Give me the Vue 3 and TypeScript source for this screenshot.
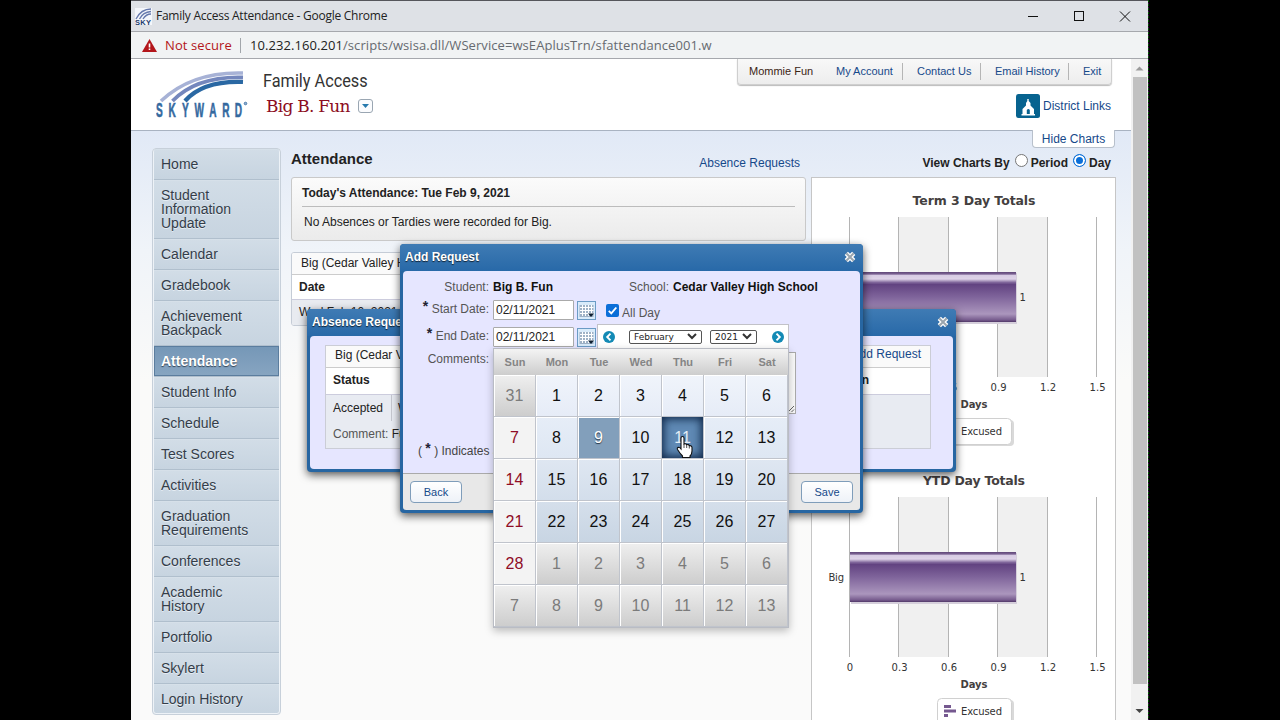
<script setup lang="ts">
interface NavItem { lines: string[]; active?: boolean }
const nav: NavItem[] = [
  { lines: ['Home'] },
  { lines: ['Student', 'Information', 'Update'] },
  { lines: ['Calendar'] },
  { lines: ['Gradebook'] },
  { lines: ['Achievement', 'Backpack'] },
  { lines: ['Attendance'], active: true },
  { lines: ['Student Info'] },
  { lines: ['Schedule'] },
  { lines: ['Test Scores'] },
  { lines: ['Activities'] },
  { lines: ['Graduation', 'Requirements'] },
  { lines: ['Conferences'] },
  { lines: ['Academic', 'History'] },
  { lines: ['Portfolio'] },
  { lines: ['Skylert'] },
  { lines: ['Login History'] },
]

interface Chart { id: string; title: string; width: number }
const charts: Chart[] = [
  { id: 'term', title: 'Term 3 Day Totals', width: 123 },
  { id: 'ytd', title: 'YTD Day Totals', width: 102 },
]
const ticks = [
  { x: 38, label: '0' },
  { x: 87.5, label: '0.3' },
  { x: 137, label: '0.6' },
  { x: 186.5, label: '0.9' },
  { x: 236, label: '1.2' },
  { x: 285.5, label: '1.5' },
]

const weekdays = ['Sun', 'Mon', 'Tue', 'Wed', 'Thu', 'Fri', 'Sat']
interface Day { n: number; kind: string }
const days: Day[] = []
for (let i = 0; i < 42; i++) {
  const row = Math.floor(i / 7)
  if (i === 0) days.push({ n: 31, kind: 'other' })
  else if (i <= 28) {
    let kind = 'r' + row
    if (i % 7 === 0) kind = 'sunday'
    if (i === 9) kind = 'now'
    if (i === 11) kind = 'picked'
    days.push({ n: i, kind })
  } else days.push({ n: i - 28, kind: 'other' })
}
</script>

<template>
  <div class="screen">
    <div class="window">
      <div class="titlebar">
        <svg class="fav" width="17" height="17" viewBox="0 0 17 17">
          <rect width="17" height="17" fill="#f4f6fb" />
          <path d="M1 11Q6 1 16 1M4.500 11Q8 4 16 3.500M8 11Q11 6 16 6" fill="none" stroke="#6679ad" stroke-width="1.300" />
          <text x="0" y="16.500" font-size="7.500" font-weight="700" textLength="16" fill="#1d3c6c">SKY</text>
        </svg>
        <span class="wtitle">Family Access Attendance - Google Chrome</span>
        <svg class="winbtns" width="110" height="14" viewBox="0 0 110 14" fill="none" stroke="#111">
          <path d="M4 7.500H14" />
          <rect x="50.500" y="2.500" width="9" height="9" />
          <path d="M96 2.500L106 12.500M106 2.500L96 12.500" />
        </svg>
      </div>
      <div class="address">
        <svg width="15" height="13" viewBox="0 0 15 13"><path d="M7.500 0L15 13H0Z" fill="#b3161b" /><path d="M7.500 4.500V8.500M7.500 9.500V11" stroke="#fff" stroke-width="1.600" /></svg>
        <span class="notsecure">Not secure</span>
        <i class="bar"></i>
        <span class="url"><b>10.232.160.201</b>/scripts/wsisa.dll/WService=wsEAplusTrn/sfattendance001.w</span>
      </div>

      <div class="viewport">
        <div class="page">
          <header class="top">
            <svg class="logo" width="96" height="52" viewBox="0 0 96 52">
              <g fill="none">
                <path d="M5 32Q36 2.500 87 4" stroke="#a7b2d6" stroke-width="3.600" />
                <path d="M16.500 32Q41 7 87 8.500" stroke="#7487bd" stroke-width="3.800" />
                <path d="M29 32Q47 11.500 87 13" stroke="#2a68a3" stroke-width="4.200" />
              </g>
              <text transform="translate(0 48) scale(.48 1)" font-size="21" font-weight="700" fill="#34699f" stroke="#34699f" stroke-width=".6">
                <tspan x="0">S</tspan><tspan x="26">K</tspan><tspan x="54">Y</tspan><tspan x="80">W</tspan><tspan x="111">A</tspan><tspan x="138">R</tspan><tspan x="164">D</tspan>
              </text>
              <circle cx="89.500" cy="34.500" r="1.300" fill="#8fb0d0" stroke="#34699f" stroke-width=".8" />
            </svg>
            <div class="ident">
              <div class="app">Family Access</div>
              <div class="who">
                <span>Big B. Fun</span>
                <svg width="15" height="14" viewBox="0 0 15 14"><rect x=".5" y=".5" width="14" height="13" rx="2.500" fill="#fbfcfe" stroke="#9aa6b2" /><path d="M4 5H11L7.500 9Z" fill="#277aae" /></svg>
              </div>
            </div>
            <div class="right">
              <nav class="links">
                <span class="me">Mommie Fun</span><a class="l1">My Account</a><a class="l2">Contact Us</a><a class="l3">Email History</a><a class="l4">Exit</a>
              </nav>
              <div class="district">
                <svg width="24" height="24" viewBox="0 0 24 24"><rect width="24" height="24" rx="2.500" fill="#07638f" /><path d="M11.300 5H12.700V7L14.500 9V11.500L18 15V20H19V21.500H5.500V20H6.500V15L10 11.500V9L11.300 7Z" fill="#fff" /><path d="M10.800 20V16Q12.300 14 13.800 16V20Z" fill="#07638f" /></svg>
                <a>District Links</a>
              </div>
            </div>
          </header>

          <div class="body">
            <aside class="side">
              <div v-for="item in nav" :key="item.lines[0]" class="nav" :class="{ active: item.active }">
                <div v-for="l in item.lines" :key="l">{{ l }}</div>
              </div>
            </aside>

            <main class="main">
              <div class="mainhead"><h1>Attendance</h1><a>Absence Requests</a></div>
              <section class="today">
                <h2>Today's Attendance: Tue Feb 9, 2021</h2>
                <p>No Absences or Tardies were recorded for Big.</p>
              </section>
              <section class="grid">
                <div class="g1">Big (Cedar Valley High School)</div>
                <div class="g2">Date</div>
                <div class="g3">Wed Feb 10, 2021</div>
              </section>
            </main>

            <section class="charts">
              <div class="hide"><a>Hide Charts</a></div>
              <div class="by">
                <span>View Charts By</span><i class="radio"></i><span>Period</span><i class="radio on"></i><span>Day</span>
              </div>
              <div class="chartbox">
                <svg v-for="c in charts" :key="c.id" width="303" height="280" viewBox="0 1 303 280">
                  <defs>
                    <linearGradient :id="c.id" x1="0" y1="0" x2="0" y2="1">
                      <stop offset="0" stop-color="#604778" /><stop offset=".04" stop-color="#7b6293" />
                      <stop offset=".07" stop-color="#d8cce4" /><stop offset=".14" stop-color="#ded3e8" />
                      <stop offset=".21" stop-color="#7f659a" /><stop offset=".25" stop-color="#624381" />
                      <stop offset=".5" stop-color="#7f649b" /><stop offset=".84" stop-color="#ab96bd" />
                      <stop offset=".96" stop-color="#765b8d" /><stop offset="1" stop-color="#4f3767" />
                    </linearGradient>
                  </defs>
                  <text x="162" y="28" text-anchor="middle" class="ct" :textLength="c.width">{{ c.title }}</text>
                  <rect x="87" y="40" width="50" height="160" fill="#f0f0f0" />
                  <rect x="186" y="40" width="50" height="160" fill="#f0f0f0" />
                  <g v-for="t in ticks" :key="t.label">
                    <rect :x="Math.floor(t.x) - 1" y="40" width="1" height="160" fill="#b4b4b4" />
                    <text :x="t.x" y="214" text-anchor="middle" class="cl" :textLength="t.label.length > 1 ? 16 : 6">{{ t.label }}</text>
                  </g>
                  <rect x="39" y="96" width="166" height="51" fill="#d5cfdb" />
                  <rect x="38" y="95" width="166" height="50" :fill="`url(#${c.id})`" />
                  <text x="16.500" y="123.500" class="cl" textLength="15.500">Big</text>
                  <text x="207.500" y="123.500" class="cl">1</text>
                  <text x="162" y="231" text-anchor="middle" class="cd" textLength="27">Days</text>
                  <rect x="126" y="243" width="76" height="26" rx="4" fill="#d9d9d9" />
                  <rect x="125.500" y="241.500" width="74" height="26" rx="4" fill="#fff" stroke="#d0d0d0" />
                  <path d="M132 249.500H139M132 254H144M132 258.500H136" stroke="#75588f" stroke-width="3" />
                  <text x="149" y="257.500" class="cl" textLength="41">Excused</text>
                </svg>
              </div>
            </section>
          </div>
        </div>

        <div class="scroll">
          <svg width="17" height="18" viewBox="0 0 17 18"><path d="M4.500 11.500L8.500 7.500L12.500 11.500Z" fill="#9b9b9b" /></svg>
          <div class="thumb"></div>
          <svg width="17" height="36" viewBox="0 0 17 36"><path d="M4.500 25L8.500 29L12.500 25Z" fill="#444" /></svg>
        </div>
      </div>

      <div class="modal absence">
        <div class="mh"><span>Absence Requests</span>
          <svg width="12" height="12" viewBox="0 0 12 12"><path d="M2.300 2.300L9.700 9.700M9.700 2.300L2.300 9.700" stroke="#fff" stroke-width="4.600" /><path d="M2.300 2.300L9.700 9.700M9.700 2.300L2.300 9.700" stroke="#9aa5ae" stroke-width="2" /></svg>
        </div>
        <div class="mb">
          <div class="addlink"><a>Add Request</a></div>
          <div class="atable">
            <div class="a1">Big (Cedar Valley High School)</div>
            <div class="a2"><b>Status</b><b>Reason</b></div>
            <div class="a3"><span>Accepted</span><em>Wed</em></div>
            <div class="a4">Comment: <u>Funeral</u></div>
          </div>
        </div>
      </div>

      <div class="modal add">
        <div class="mh"><span>Add Request</span>
          <svg width="12" height="12" viewBox="0 0 12 12"><path d="M2.300 2.300L9.700 9.700M9.700 2.300L2.300 9.700" stroke="#fff" stroke-width="4.600" /><path d="M2.300 2.300L9.700 9.700M9.700 2.300L2.300 9.700" stroke="#9aa5ae" stroke-width="2" /></svg>
        </div>
        <div class="mb">
          <div class="row ra"><label>Student:</label><b>Big B. Fun</b><span class="school">School:</span><b class="sname">Cedar Valley High School</b></div>
          <div class="row rb"><label><s>*</s> Start Date:</label><div class="inp">02/11/2021</div><i class="cal"><svg width="17" height="17" viewBox="0 0 17 17"><rect x="1.500" y="3" width="14" height="12" fill="#9fb2c6" /><path d="M2 5.500H15.500M2 8.500H15.500M2 11.500H15.500M4.500 3V14M7.500 3V14M10.500 3V14M13.500 3V14" stroke="#fff" stroke-width="1" /><path d="M10 11.500H16L13 15Z" fill="#0d1e30" /></svg></i>
            <svg class="check" width="13" height="13" viewBox="0 0 13 13"><rect width="13" height="13" rx="2" fill="#0b6fd8" /><path d="M2.800 6.800L5.300 9.300L10.300 3.500" fill="none" stroke="#fff" stroke-width="1.900" /></svg><span class="allday">All Day</span>
          </div>
          <div class="row rc"><label><s>*</s> End Date:</label><div class="inp">02/11/2021</div><i class="cal"><svg width="17" height="17" viewBox="0 0 17 17"><rect x="1.500" y="3" width="14" height="12" fill="#9fb2c6" /><path d="M2 5.500H15.500M2 8.500H15.500M2 11.500H15.500M4.500 3V14M7.500 3V14M10.500 3V14M13.500 3V14" stroke="#fff" stroke-width="1" /><path d="M10 11.500H16L13 15Z" fill="#0d1e30" /></svg></i></div>
          <div class="row rd"><label>Comments:</label>
            <div class="area"><svg width="8" height="8" viewBox="0 0 8 8"><path d="M1 7L7 1M4.500 7L7 4.500" stroke="#555" stroke-width=".9" /></svg></div>
          </div>
          <div class="ind">( <s>*</s> ) Indicates a required field</div>
        </div>
        <div class="mf"><button>Back</button><button>Save</button></div>
      </div>

      <div class="picker">
        <div class="ptop">
          <svg width="12" height="12" viewBox="0 0 12 12"><circle cx="6" cy="6" r="6" fill="#138ab5" /><path d="M7.500 2.700L4.200 6L7.500 9.300" fill="none" stroke="#fff" stroke-width="1.900" /></svg>
          <div class="sel month"><span>February</span><svg width="10" height="7" viewBox="0 0 10 7"><path d="M1 1L5 5L9 1" fill="none" stroke="#333" stroke-width="2" /></svg></div>
          <div class="sel year"><span>2021</span><svg width="10" height="7" viewBox="0 0 10 7"><path d="M1 1L5 5L9 1" fill="none" stroke="#333" stroke-width="2" /></svg></div>
          <svg class="next" width="12" height="12" viewBox="0 0 12 12"><circle cx="6" cy="6" r="6" fill="#138ab5" /><path d="M4.500 2.700L7.800 6L4.500 9.300" fill="none" stroke="#fff" stroke-width="1.900" /></svg>
        </div>
        <div class="pbody">
          <div class="wk"><span v-for="w in weekdays" :key="w">{{ w }}</span></div>
          <div class="cells"><div v-for="(d, i) in days" :key="i" class="cell" :class="d.kind">{{ d.n }}</div></div>
        </div>
      </div>

      <svg class="cursor" width="18" height="24" viewBox="0 0 18 24"><path d="M5 13V3Q5 1.500 6.500 1.500T8 3V9Q10 8.300 10.700 9.800Q12.600 9 13.300 10.700Q15.800 10.300 16 12.500V16Q16 19 14 21V22.500H6.500V21Q4 18.500 1.500 14.500Q.8 12.500 2.500 12.300Q3.700 12.300 5 14Z" fill="#fff" stroke="#111" stroke-width="1.100" /><path d="M8 9V13M10.700 10V13M13.300 11V13.500" stroke="#222" stroke-width=".8" /></svg>
    </div>
    <div class="edge"></div>
  </div>
</template>

<style>
html, body { margin: 0; background: #000; overflow: hidden; }
</style>
<style scoped>
* { box-sizing: border-box; }
.screen { width: 1280px; height: 720px; background: #000; display: flex; padding-left: 131px; overflow: hidden; font: 12px/14px "Liberation Sans", Arial, sans-serif; color: #222; }
.window { position: relative; width: 1017px; height: 720px; flex: none; background: #fff; overflow: hidden; }
.edge { width: 1px; background: repeating-linear-gradient(#050 0 2px, #111 2px 3px, #405 3px 4px); }
a { color: #16498a; }
.titlebar { height: 32px; border-top: 1px solid #55565b; border-bottom: 1px solid #a6a8ad; background: #dee1e6; display: flex; align-items: center; padding: 0 17px 0 4px; }
.fav { flex: none; }
.wtitle { font: 12px/16px "Open Sans", sans-serif; color: #222; margin-left: 4px; white-space: nowrap; letter-spacing: -.25px; }
.winbtns { margin-left: auto; margin-right: -3px; }
.address { height: 27px; border-bottom: 1px solid #a6a8ad; background: #f1f3f4; display: flex; align-items: center; padding-left: 11px; font: 13px/18px "Open Sans", sans-serif; color: #666a70; }
.notsecure { color: #b3161b; margin-left: 8px; width: 68px; white-space: nowrap; letter-spacing: .1px; }
.bar { width: 1px; height: 15px; background: #a2a6ab; margin: 0 9px 0 7px; }
.url { white-space: nowrap; letter-spacing: .07px; }
.url b { font-weight: 400; color: #222; }
.viewport { display: flex; height: 661px; }
.page { width: 1000px; flex: none; background: #fafafa; overflow: hidden; }
.scroll { width: 17px; background: #f1f1f1; display: flex; flex-direction: column; }
.scroll svg { flex: none; }
.thumb { flex: 1; background: #c1c1c1; margin: 0 1px 0 2px; }
.top { height: 72px; background: #fff; border-bottom: 1px solid #a9b3c1; display: flex; }
.logo { margin: 10px 0 0 25px; flex: none; }
.ident { margin: 11px 0 0 11px; }
.app { font: 18px/22px Roboto, sans-serif; color: #333; transform: scaleX(.905); transform-origin: 0 0; white-space: nowrap; }
.who { font: 17px/22px "DejaVu Serif", serif; color: #8c0d22; display: flex; align-items: center; gap: 8px; margin: 3px 0 0 3px; white-space: nowrap; }
.who span { width: 84px; letter-spacing: -.75px; }
.right { margin-left: auto; margin-right: 19px; display: flex; flex-direction: column; align-items: flex-end; }
.links { width: 375px; height: 26px; border: 1px solid #cfcfcf; border-top: 0; border-radius: 0 0 4px 4px; background: linear-gradient(#f8f8f8, #ededed); box-shadow: 0 1px 1px #bbb; display: flex; align-items: center; font-size: 11px; padding: 0 0 1px 11px; }
.links .me { width: 87px; color: #3b2415; }
.links a { border-right: 1px solid #b5b5b5; height: 17px; line-height: 17px; white-space: nowrap; }
.l1 { width: 67px; } .l2 { width: 78px; padding-left: 14px; } .l3 { width: 88px; padding-left: 14px; } .links .l4 { padding-left: 14px; border: 0; }
.district { display: flex; align-items: center; gap: 3px; margin: 9px 1px 0 0; }
.body { display: flex; height: 589px; padding-left: 21px; background: linear-gradient(#e1e9f6 0, #f0f4f9 120px, #fafaf9 250px, #fafafa 100%); }
.side { width: 129px; height: 567px; margin-top: 17px; border: 2px solid #edf2f7; border-top-width: 1px; border-radius: 4px; outline: 1px solid #c7d0da; outline-offset: -1px; flex: none; font-size: 14px; color: #343d49; overflow: hidden; }
.nav { padding: 8px 7px; border-bottom: 1px solid #b0bfcd; background: linear-gradient(#d2dde7, #c7d4e0); box-shadow: inset 0 1px #d6e0e9; text-shadow: 0 1px #e6edf4; }
.nav:last-child { border: 0; }
.active { background: linear-gradient(#7597b7, #87a5c1); color: #fff; font-weight: 700; text-shadow: 0 1px 1px #345; box-shadow: inset 0 0 0 1px #5b7d9e; }
.main { width: 515px; margin-left: 10px; flex: none; }
.mainhead { display: flex; justify-content: space-between; align-items: center; height: 46px; padding: 12px 6px 0 0; }
h1 { margin: -3px 0 0; font-size: 15px; line-height: 18px; }
.mainhead a { margin-top: 5px; }
.today { height: 64px; border: 1px solid #c9c9c9; border-radius: 3px; background: linear-gradient(#fbfbfb, #ebebeb); padding: 0 10px; }
h2 { margin: 0; font-size: 12px; line-height: 30px; height: 29px; border-bottom: 1px solid #bcbcbc; }
.today p { margin: 8px 2px; white-space: nowrap; }
.grid { margin-top: 11px; border: 1px solid #c5ccd6; border-radius: 3px; overflow: hidden; background: #fff; height: 74px; white-space: nowrap; }
.g1 { height: 22px; line-height: 20px; padding-left: 9px; background: #fafafa; border-bottom: 1px solid #ccc; }
.g2 { height: 25px; line-height: 24px; padding-left: 7px; font-weight: 700; border-bottom: 1px solid #ccd; }
.g3 { height: 26px; line-height: 24px; padding-left: 7px; background: #e8ebf0; }
.charts { width: 305px; margin-left: 5px; }
.hide { width: 83px; height: 18px; margin: -1px 1px 0 auto; border: 1px solid #b8c0cb; border-top: 0; border-radius: 0 0 4px 4px; background: #fff; text-align: center; line-height: 19px; }
.by { height: 29px; display: flex; align-items: center; justify-content: flex-end; font-weight: 700; padding-right: 5px; white-space: nowrap; }
.radio { width: 13px; height: 13px; border: 1px solid #767676; border-radius: 50%; background: #fff; margin: -4px 3px 0 5px; flex: none; }
.radio.on { border-color: #0b6fd8; background: #0b6fd8; box-shadow: inset 0 0 0 2px #fff; }
.chartbox { width: 305px; height: 560px; border: 1px solid #c6c6c6; background: #fff; }
.chartbox svg { display: block; }
.ct { font: 700 12.500px "DejaVu Sans", sans-serif; fill: #443f3f; }
.cl { font: 10px "DejaVu Sans", sans-serif; fill: #333; }
.cd { font: 700 10px "DejaVu Sans", sans-serif; fill: #443f3f; }
.modal { position: absolute; background: #2766a2; border-radius: 4px; box-shadow: 0 3px 8px rgba(0,0,0,.65); display: flex; flex-direction: column; padding: 0 3px 3px; white-space: nowrap; }
.mh { height: 27px; flex: none; margin: 0 -3px; padding: 0 7px 2px 5px; display: flex; align-items: center; justify-content: space-between; color: #fff; font-weight: 700; text-shadow: 0 1px 1px #123; background: linear-gradient(#3f7bb4, #2869a8); border-radius: 4px 4px 0 0; }
.mb { background: #e6e6ff; border-radius: 4px; flex: 1; overflow: hidden; }
.absence { left: 176px; top: 309px; width: 649px; height: 163px; }
.add { left: 269px; top: 244px; width: 463px; height: 269px; }
.addlink { height: 9px; text-align: right; padding: 11px 32px 0 0; line-height: 14px; }
.atable { margin: -2px 22px 0 15px; border: 1px solid #cbcdd6; height: 104px; background: #e8ebf2; }
.a1 { height: 22px; padding-left: 9px; line-height: 19px; background: #fafafa; border-bottom: 1px solid #ccc; }
.a2 { height: 27px; background: #fff; border-bottom: 1px solid #ccd; line-height: 25px; padding: 0 61px 0 7px; display: flex; justify-content: space-between; }
.a3 { display: flex; line-height: 26px; padding-left: 7px; }
.a3 span { width: 59px; border-right: 1px solid #c5c7cf; }
.a3 em { font-style: normal; padding-left: 6px; }
.a4 { padding-left: 7px; line-height: 27px; color: #555; }
.a4 u { text-decoration: none; color: #222; }
.add .mb { border-radius: 4px 4px 0 0; }
.row { display: flex; align-items: center; color: #555; }
.row label { width: 86px; margin-right: 4px; text-align: right; flex: none; }
.rb label, .rc label { margin-top: -2px; }
s { text-decoration: none; color: #223; font-weight: 700; font-size: 14px; line-height: 10px; position: relative; top: -2px; }
.row b { color: #111; }
.ra { height: 27px; padding-top: 5px; }
.school { margin-left: 76px; } .sname { margin-left: 4px; }
.rb { height: 23px; } .rc { height: 31px; }
.inp { width: 81px; height: 20px; border: 1px solid #aaa; border-radius: 1px; background: #fff; color: #222; padding: 2px; line-height: 15px; }
.cal { width: 19px; height: 19px; border: 1px solid #6b9bc5; background: #d9ebfa; margin: 1px 0 0 3px; display: flex; }
.check { margin: 1px 0 0 10px; }
.allday { margin: 6px 0 0 3px; }
.rd { height: 62px; align-items: flex-start; }
.area { width: 303px; height: 62px; border: 1px solid #aaa; background: #fafafa; display: flex; justify-content: flex-end; align-items: flex-end; }
.ind { margin: 30px 0 0 15px; color: #444; }
.mf { height: 37px; flex: none; background: #e8e8e8; border-top: 1px solid #aaa; border-radius: 0 0 3px 3px; display: flex; justify-content: space-between; align-items: center; padding: 0 7px; }
button { width: 52px; height: 22px; border: 1px solid #7f9dba; border-radius: 4px; background: linear-gradient(#fff, #eef2f8); font: 11px "Liberation Sans", sans-serif; color: #16498a; padding: 0; }
.picker { position: absolute; left: 362px; top: 324px; width: 296px; display: flex; flex-direction: column; align-items: flex-end; }
.ptop { width: 192px; height: 25px; background: #fff; border: 1px solid #c2c2c8; border-bottom: 0; display: flex; align-items: center; padding: 0 4px 1px 5px; }
.sel { height: 14px; border: 1px solid #555; border-radius: 2px; display: flex; align-items: center; justify-content: space-between; padding: 0 4px; font: 9px/12px "DejaVu Sans", sans-serif; color: #222; }
.month { width: 73px; margin-left: 14px; } .year { width: 47px; margin-left: 8px; }
.next { margin-left: auto; }
.pbody { width: 296px; border: 1px solid #b9bcc4; box-shadow: 0 3px 8px rgba(0,0,0,.25); background: #fff; margin-top: -1px; }
.wk { height: 26px; display: grid; grid-template-columns: repeat(7, 42px); background: linear-gradient(#f4f4f4, #cdcdcd); color: #858585; font-weight: 700; font-size: 11px; text-align: center; line-height: 27px; }
.cells { display: grid; grid-template-columns: repeat(7, 42px); grid-auto-rows: 42px; }
.cell { border-right: 1px solid #c0c4cc; border-bottom: 1px solid #c0c4cc; box-shadow: inset 1px 1px #fff; font-size: 16px; line-height: 42px; text-align: center; color: #111; }
.r0 { background: linear-gradient(#f0f4fb, #e6ecf7); }
.r1 { background: linear-gradient(#e6edf7, #dee7f3); }
.r2 { background: linear-gradient(#dfe7f2, #d3deeb); }
.r3 { background: linear-gradient(#d5dfeb, #c8d5e3); }
.sunday { background: #f3f3f3; color: #8f0c26; }
.other { background: linear-gradient(#efefef, #cdcdcd); color: #7b7b7b; }
.now { background: #829fbb; color: #fff; text-shadow: 0 1px 1px #234; }
.picked { background: #5f89b4; color: #e4edf6; box-shadow: inset 0 0 9px 2px #10294a; }
.cursor { position: absolute; left: 544.5px; top: 435px; }
</style>
